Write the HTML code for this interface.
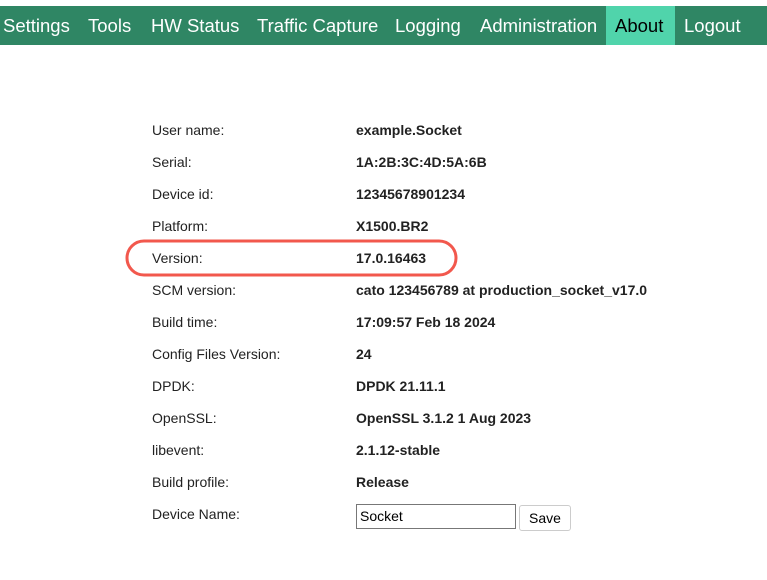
<!DOCTYPE html>
<html><head><style>
body{margin:0;background:#fff;font-family:"Liberation Sans",Arial,sans-serif;width:767px;height:580px;position:relative;overflow:hidden}
.nav{position:absolute;top:6px;left:0;width:767px;height:39px;background:#2f8664}
.nav span{position:absolute;top:0;height:39px;line-height:39px;font-size:18.5px;color:#fff}
.nav .a{background:#50d4ab;color:#000;padding:0 9px}
.r{position:absolute;font-size:14px;color:#222}
.l{left:152px}.v{left:356px;font-weight:bold}
</style></head><body>
<div class="nav">
<span style="left:3px">Settings</span>
<span style="left:88px">Tools</span>
<span style="left:151px">HW Status</span>
<span style="left:257px">Traffic Capture</span>
<span style="left:395px">Logging</span>
<span style="left:480px">Administration</span>
<span class="a" style="left:606px;width:51px">About</span>
<span style="left:684px">Logout</span>
</div>
<div class="r l" style="top:122px">User name:</div><div class="r v" style="top:122px">example.Socket</div>
<div class="r l" style="top:154px">Serial:</div><div class="r v" style="top:154px">1A:2B:3C:4D:5A:6B</div>
<div class="r l" style="top:186px">Device id:</div><div class="r v" style="top:186px">12345678901234</div>
<div class="r l" style="top:218px">Platform:</div><div class="r v" style="top:218px">X1500.BR2</div>
<div class="r l" style="top:250px">Version:</div><div class="r v" style="top:250px">17.0.16463</div>
<div class="r l" style="top:282px">SCM version:</div><div class="r v" style="top:282px">cato 123456789 at production_socket_v17.0</div>
<div class="r l" style="top:314px">Build time:</div><div class="r v" style="top:314px">17:09:57 Feb 18 2024</div>
<div class="r l" style="top:346px">Config Files Version:</div><div class="r v" style="top:346px">24</div>
<div class="r l" style="top:378px">DPDK:</div><div class="r v" style="top:378px">DPDK 21.11.1</div>
<div class="r l" style="top:410px">OpenSSL:</div><div class="r v" style="top:410px">OpenSSL 3.1.2 1 Aug 2023</div>
<div class="r l" style="top:442px">libevent:</div><div class="r v" style="top:442px">2.1.12-stable</div>
<div class="r l" style="top:474px">Build profile:</div><div class="r v" style="top:474px">Release</div>
<div class="r l" style="top:506px">Device Name:</div>
<div style="position:absolute;left:356px;top:504px;width:155px;height:23px;border:1px solid #777;font-size:14px;line-height:23px;padding-left:3px">Socket</div>
<div style="position:absolute;left:519px;top:505px;width:50px;height:24px;border:1px solid #ccc;border-radius:3px;font-size:14px;line-height:24px;text-align:center;background:#fff">Save</div>
<svg style="position:absolute;left:0;top:0" width="767" height="580"><rect x="127" y="241" width="329" height="34" rx="17" ry="17" fill="none" stroke="#f2584d" stroke-width="3"/></svg>
</body></html>
